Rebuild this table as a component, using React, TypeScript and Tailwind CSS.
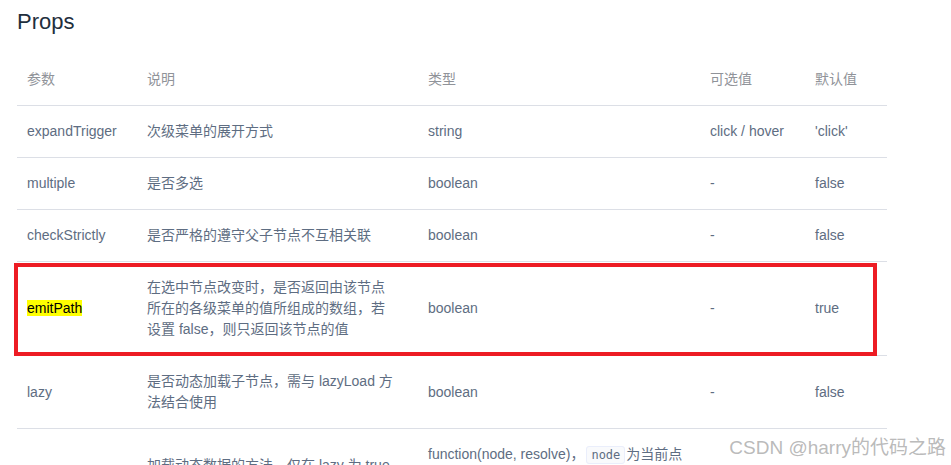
import React from "react";

type Row = {
  name: React.ReactNode;
  desc: React.ReactNode;
  type: React.ReactNode;
  options: string;
  def: string;
};

const Code = ({ children }: { children: React.ReactNode }) => (
  <code className="ml-[2px] mr-[1px] rounded-[3px] border border-[#eaeefb] bg-[#f9fafc] px-[4px] py-[1px] align-baseline font-['DejaVu_Sans_Mono',monospace] text-[12px] leading-[12px] text-[#5e6d82]">
    {children}
  </code>
);

const rows: Row[] = [
  { name: "expandTrigger", desc: "次级菜单的展开方式", type: "string", options: "click / hover", def: "'click'" },
  { name: "multiple", desc: "是否多选", type: "boolean", options: "-", def: "false" },
  { name: "checkStrictly", desc: "是否严格的遵守父子节点不互相关联", type: "boolean", options: "-", def: "false" },
  {
    name: <span className="bg-[#ffff00] text-black">emitPath</span>,
    desc: (
      <>
        在选中节点改变时，是否返回由该节点
        <br />
        所在的各级菜单的值所组成的数组，若
        <br />
        设置 false，则只返回该节点的值
      </>
    ),
    type: "boolean",
    options: "-",
    def: "true",
  },
  {
    name: "lazy",
    desc: (
      <>
        是否动态加载子节点，需与 lazyLoad 方
        <br />
        法结合使用
      </>
    ),
    type: "boolean",
    options: "-",
    def: "false",
  },
  {
    name: "lazyLoad",
    desc: (
      <>
        加载动态数据的方法，仅在 lazy 为 true
        <br />
        时有效
      </>
    ),
    type: (
      <>
        function(node, resolve)，<Code>node</Code>为当前点
        <br />
        击的节点，<Code>resolve</Code>为数据加载完成的
        <br />
        回调(必须调用)
      </>
    ),
    options: "-",
    def: "-",
  },
];

export default function App() {
  return (
    <div className="relative h-[465px] w-[951px] overflow-hidden bg-white px-[17px] font-['Liberation_Sans','Noto_Sans_CJK_SC',sans-serif]">
      <h3 className="pt-[10px] text-[22px] leading-[24px] font-normal text-[#1f2f3d]">Props</h3>
      <table className="mt-[20px] w-[870px] table-fixed border-collapse text-left text-[14px] leading-[21px]">
        <colgroup>
          <col className="w-[120px]" />
          <col className="w-[281px]" />
          <col className="w-[282px]" />
          <col className="w-[105px]" />
          <col className="w-[82px]" />
        </colgroup>
        <thead>
          <tr className="border-b border-[#dcdfe6]">
            {["参数", "说明", "类型", "可选值", "默认值"].map((h) => (
              <th key={h} className="px-[10px] py-[15px] align-middle font-normal text-[#909399]">
                {h}
              </th>
            ))}
          </tr>
        </thead>
        <tbody className="text-[#5e6d82]">
          {rows.map((r, i) => (
            <tr key={i} className="border-b border-[#dcdfe6]">
              <td className="px-[10px] py-[15px] align-middle">{r.name}</td>
              <td className="px-[10px] py-[15px] align-middle">{r.desc}</td>
              <td className="whitespace-nowrap px-[10px] py-[15px] align-middle">{r.type}</td>
              <td className="px-[10px] py-[15px] align-middle">{r.options}</td>
              <td className="px-[10px] py-[15px] align-middle">{r.def}</td>
            </tr>
          ))}
        </tbody>
      </table>

      <div className="pointer-events-none absolute left-[14px] top-[263px] h-[93px] w-[863px] border-[4px] border-[#ed1c24]" />

      <div className="pointer-events-none absolute right-[5px] top-[437px] text-[19px] leading-[22px] text-[#a8a8a8]/80">
        CSDN @harry的代码之路
      </div>
    </div>
  );
}
